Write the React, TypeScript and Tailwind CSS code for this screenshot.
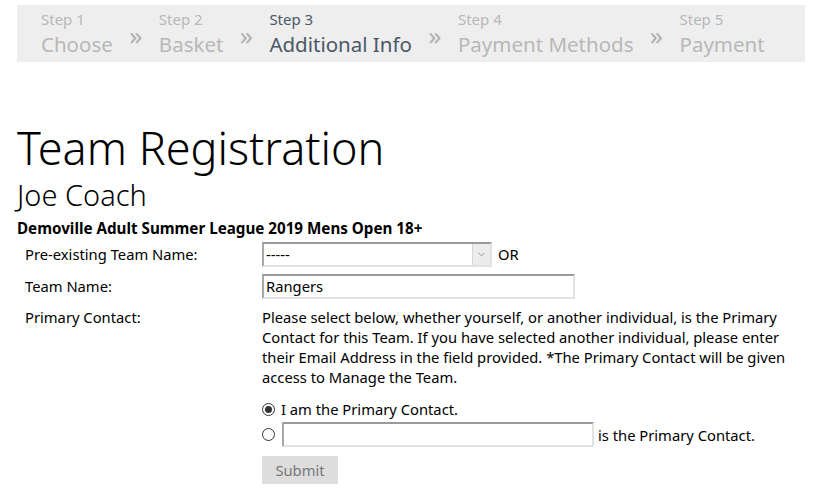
import { ChevronDown } from 'lucide-react';

const steps = [
  { n: 'Step 1', label: 'Choose' },
  { n: 'Step 2', label: 'Basket' },
  { n: 'Step 3', label: 'Additional Info', active: true },
  { n: 'Step 4', label: 'Payment Methods' },
  { n: 'Step 5', label: 'Payment' },
];

const insetBox =
  'border-2 border-t-[#9a9a9a] border-l-[#a8a8a8] border-r-[#e2e2e2] border-b-[#e2e2e2] bg-white';

export default function App() {
  return (
    <div className="min-h-[499px] bg-white px-[17px] pt-[5px] text-black font-['Noto_Sans',sans-serif]">
      {/* Step bar */}
      <div className="flex h-[57px] items-start bg-[#eeeeee] pl-[24px] pt-[4px]">
        {steps.map((s, i) => (
          <div key={s.n} className="flex items-start">
            {i > 0 && (
              <span className="mx-[16px] mt-[13px] w-[14px] text-center text-[26px] leading-[26px] text-[#b0b0b0]">
                »
              </span>
            )}
            <div className={`flex flex-col ${s.active ? 'text-[#4a5866]' : 'text-[#b8b8b8]'}`}>
              <span className="text-[15px] leading-[21px]">{s.n}</span>
              <span className="text-[20.5px] leading-[28px]">{s.label}</span>
            </div>
          </div>
        ))}
      </div>

      <h1 className="mt-[58px] text-[45px] leading-[56px] font-light">Team Registration</h1>
      <h2 className="mt-[1px] text-[29px] leading-[36px] font-light">Joe Coach</h2>
      <h3 className="mt-[5px] text-[15.2px] leading-[20px] font-bold">
        Demoville Adult Summer League 2019 Mens Open 18+
      </h3>

      <div className="grid grid-cols-[245px_1fr] text-[14.75px] leading-[20px]">
        <div className="flex h-[32px] items-center pl-2">Pre-existing Team Name:</div>
        <div className="flex h-[32px] items-center gap-[6px]">
          <div className={`flex h-[25px] w-[230px] items-center justify-between ${insetBox}`}>
            <span className="pl-[2px]">-----</span>
            <span className="flex h-full w-[18px] items-center justify-center border-l border-[#d6d6d6] bg-[#ececec]">
              <ChevronDown className="h-[11px] w-[11px] text-[#777]" strokeWidth={1.5} />
            </span>
          </div>
          <span>OR</span>
        </div>

        <div className="flex h-[32px] items-center pl-2">Team Name:</div>
        <div className="flex h-[32px] items-center">
          <div className={`flex h-[25px] w-[313px] items-center pl-[2px] ${insetBox}`}>Rangers</div>
        </div>

        <div className="pl-2 pt-[5px]">Primary Contact:</div>
        <div className="pt-[5px]">
          <p>
            Please select below, whether yourself, or another individual, is the Primary
            <br />
            Contact for this Team. If you have selected another individual, please enter
            <br />
            their Email Address in the field provided. *The Primary Contact will be given
            <br />
            access to Manage the Team.
          </p>
          <div className="mt-[12px] flex items-center gap-[6px]">
            <span className="flex h-[13px] w-[13px] items-center justify-center rounded-full border border-[#333]">
              <span className="h-[7px] w-[7px] rounded-full bg-[#333]" />
            </span>
            <span>I am the Primary Contact.</span>
          </div>
          <div className="mt-[3px] flex items-center">
            <span className="mr-[7px] h-[13px] w-[13px] rounded-full border border-[#333]" />
            <div className={`h-[25px] w-[312px] ${insetBox}`} />
            <span className="ml-[4px]">is the Primary Contact.</span>
          </div>
          <button className="mt-[9px] h-[28px] w-[76px] bg-[#dddddd] text-[14.75px] text-[#777]">
            Submit
          </button>
        </div>
      </div>
    </div>
  );
}
